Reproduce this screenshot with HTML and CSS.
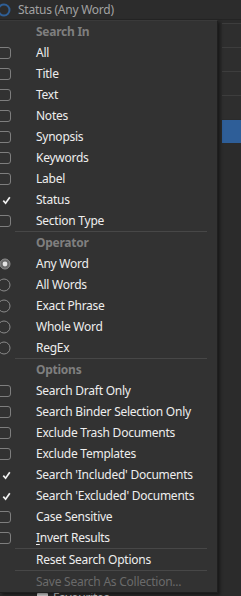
FILE: index.html
```html
<!DOCTYPE html>
<html>
<head>
<meta charset="utf-8">
<link rel="stylesheet" href="styles.css">
</head>
<body>
<div class="app">
  <div class="topbar">
    <svg class="topicon" width="14" height="20" viewBox="0 0 14 20"><circle cx="2" cy="10" r="5.5" fill="none" stroke="#2f5f96" stroke-width="2"/></svg>
    <span class="toptext">Status (Any Word)</span>
  </div>
  <div class="pane">
    <div class="list">
      <div class="lrow"></div>
      <div class="lrow"></div>
      <div class="lrow"></div>
      <div class="lrow"></div>
      <div class="lrow sel"></div>
    </div>
  </div>
  <div class="footer"><span class="fbox"></span><span class="ftext">Favourites</span></div>

  <div class="menu">
    <div class="row head"><span class="ind"></span><span class="lbl">Search In</span></div>
    <div class="row"><span class="ind"><svg width="16" height="14" viewBox="0 0 16 14"><rect x="-3" y="1.5" width="13.5" height="11" rx="2.5" fill="none" stroke="#7e7e7e"/></svg></span><span class="lbl">All</span></div>
    <div class="row"><span class="ind"><svg width="16" height="14" viewBox="0 0 16 14"><rect x="-3" y="1.5" width="13.5" height="11" rx="2.5" fill="none" stroke="#7e7e7e"/></svg></span><span class="lbl">Title</span></div>
    <div class="row"><span class="ind"><svg width="16" height="14" viewBox="0 0 16 14"><rect x="-3" y="1.5" width="13.5" height="11" rx="2.5" fill="none" stroke="#7e7e7e"/></svg></span><span class="lbl">Text</span></div>
    <div class="row"><span class="ind"><svg width="16" height="14" viewBox="0 0 16 14"><rect x="-3" y="1.5" width="13.5" height="11" rx="2.5" fill="none" stroke="#7e7e7e"/></svg></span><span class="lbl">Notes</span></div>
    <div class="row"><span class="ind"><svg width="16" height="14" viewBox="0 0 16 14"><rect x="-3" y="1.5" width="13.5" height="11" rx="2.5" fill="none" stroke="#7e7e7e"/></svg></span><span class="lbl">Synopsis</span></div>
    <div class="row"><span class="ind"><svg width="16" height="14" viewBox="0 0 16 14"><rect x="-3" y="1.5" width="13.5" height="11" rx="2.5" fill="none" stroke="#7e7e7e"/></svg></span><span class="lbl">Keywords</span></div>
    <div class="row"><span class="ind"><svg width="16" height="14" viewBox="0 0 16 14"><rect x="-3" y="1.5" width="13.5" height="11" rx="2.5" fill="none" stroke="#7e7e7e"/></svg></span><span class="lbl">Label</span></div>
    <div class="row"><span class="ind"><svg width="16" height="14" viewBox="0 0 16 14"><path d="M3.3 7.6 L5.6 10.2 L9.8 4.2" fill="none" stroke="#f2f2f2" stroke-width="1.7"/></svg></span><span class="lbl">Status</span></div>
    <div class="row"><span class="ind"><svg width="16" height="14" viewBox="0 0 16 14"><rect x="-3" y="1.5" width="13.5" height="11" rx="2.5" fill="none" stroke="#7e7e7e"/></svg></span><span class="lbl">Section Type</span></div>
    <div class="sep"></div>
    <div class="row head"><span class="ind"></span><span class="lbl">Operator</span></div>
    <div class="row"><span class="ind"><svg width="16" height="14" viewBox="0 0 16 14"><circle cx="5" cy="7" r="5" fill="#6a6a6a" stroke="#8e8e8e"/><circle cx="5" cy="7" r="2.4" fill="#e4e4e4"/></svg></span><span class="lbl">Any Word</span></div>
    <div class="row"><span class="ind"><svg width="16" height="14" viewBox="0 0 16 14"><circle cx="4" cy="7" r="6" fill="none" stroke="#8a8a8a"/></svg></span><span class="lbl">All Words</span></div>
    <div class="row"><span class="ind"><svg width="16" height="14" viewBox="0 0 16 14"><circle cx="4" cy="7" r="6" fill="none" stroke="#8a8a8a"/></svg></span><span class="lbl">Exact Phrase</span></div>
    <div class="row"><span class="ind"><svg width="16" height="14" viewBox="0 0 16 14"><circle cx="4" cy="7" r="6" fill="none" stroke="#8a8a8a"/></svg></span><span class="lbl">Whole Word</span></div>
    <div class="row"><span class="ind"><svg width="16" height="14" viewBox="0 0 16 14"><circle cx="4" cy="7" r="6" fill="none" stroke="#8a8a8a"/></svg></span><span class="lbl">RegEx</span></div>
    <div class="sep"></div>
    <div class="row head"><span class="ind"></span><span class="lbl">Options</span></div>
    <div class="row"><span class="ind"><svg width="16" height="14" viewBox="0 0 16 14"><rect x="-3" y="1.5" width="13.5" height="11" rx="2.5" fill="none" stroke="#7e7e7e"/></svg></span><span class="lbl">Search Draft Only</span></div>
    <div class="row"><span class="ind"><svg width="16" height="14" viewBox="0 0 16 14"><rect x="-3" y="1.5" width="13.5" height="11" rx="2.5" fill="none" stroke="#7e7e7e"/></svg></span><span class="lbl">Search Binder Selection Only</span></div>
    <div class="row"><span class="ind"><svg width="16" height="14" viewBox="0 0 16 14"><rect x="-3" y="1.5" width="13.5" height="11" rx="2.5" fill="none" stroke="#7e7e7e"/></svg></span><span class="lbl">Exclude Trash Documents</span></div>
    <div class="row"><span class="ind"><svg width="16" height="14" viewBox="0 0 16 14"><rect x="-3" y="1.5" width="13.5" height="11" rx="2.5" fill="none" stroke="#7e7e7e"/></svg></span><span class="lbl">Exclude Templates</span></div>
    <div class="row"><span class="ind"><svg width="16" height="14" viewBox="0 0 16 14"><path d="M3.3 7.6 L5.6 10.2 L9.8 4.2" fill="none" stroke="#f2f2f2" stroke-width="1.7"/></svg></span><span class="lbl">Search 'Included' Documents</span></div>
    <div class="row"><span class="ind"><svg width="16" height="14" viewBox="0 0 16 14"><path d="M3.3 7.6 L5.6 10.2 L9.8 4.2" fill="none" stroke="#f2f2f2" stroke-width="1.7"/></svg></span><span class="lbl">Search 'Excluded' Documents</span></div>
    <div class="row"><span class="ind"><svg width="16" height="14" viewBox="0 0 16 14"><rect x="-3" y="1.5" width="13.5" height="11" rx="2.5" fill="none" stroke="#7e7e7e"/></svg></span><span class="lbl">Case Sensitive</span></div>
    <div class="row"><span class="ind"><svg width="16" height="14" viewBox="0 0 16 14"><rect x="-3" y="1.5" width="13.5" height="11" rx="2.5" fill="none" stroke="#7e7e7e"/></svg></span><span class="lbl"><u>I</u>nvert Results</span></div>
    <div class="sep"></div>
    <div class="row"><span class="ind"></span><span class="lbl">Reset Search Options</span></div>
    <div class="sep"></div>
    <div class="row dis"><span class="ind"></span><span class="lbl">Save Search As Collection...</span></div>
  </div>
</div>
</body>
</html>
```

FILE: styles.css
```css
html, body {
  margin: 0;
  padding: 0;
  background: #2b2b2b;
  overflow: hidden;
}
.app {
  position: relative;
  width: 241px;
  height: 596px;
  display: flex;
  flex-direction: column;
  font-family: "Noto Sans", "Open Sans", sans-serif;
  font-size: 12px;
  letter-spacing: -0.25px;
}
.topbar {
  height: 20px;
  display: flex;
  align-items: center;
  background: #2c2c2c;
  border-bottom: 1px solid #242424;
  box-sizing: border-box;
}
.topicon {
  display: block;
  width: 18px;
  flex: none;
}
.toptext {
  color: #a2a2a2;
  white-space: nowrap;
}
.pane {
  flex: 1;
  display: flex;
  justify-content: flex-end;
}
.list {
  width: 19px;
  padding-top: 3px;
  display: flex;
  flex-direction: column;
}
.lrow {
  height: 24px;
  border-top: 1px solid #3d3d3d;
  box-sizing: border-box;
  background: #2e2e2e;
}
.lrow.sel {
  background: #2e5e98;
  border-top: none;
  height: 23px;
  margin-top: 1px;
}
.footer {
  height: 4px;
  display: flex;
  align-items: flex-start;
  gap: 5px;
  padding-left: 37px;
  overflow: hidden;
}
.fbox {
  width: 11px;
  height: 10px;
  margin-top: 1px;
  background: #d8d8d8;
  border-radius: 1px;
}
.ftext {
  color: #cfcfcf;
  line-height: 14px;
  margin-top: -1px;
}
.menu {
  position: absolute;
  left: 0;
  top: 20px;
  width: 218px;
  box-sizing: border-box;
  background: #323232;
  border-top: 1px solid #3a3a3a;
  border-right: 1px solid #1f1f1f;
  border-bottom: 1px solid #1f1f1f;
  box-shadow: 2px 2px 3px rgba(0,0,0,0.45);
  display: flex;
  flex-direction: column;
}
.row {
  height: 21px;
  display: flex;
  align-items: center;
  color: #eeeeee;
  white-space: nowrap;
}
.ind {
  width: 36px;
  flex: none;
  display: flex;
  align-items: center;
}
.ind svg {
  display: block;
}
.row.head {
  color: #7f7f7f;
  font-weight: bold;
}
.row.dis {
  color: #6a6a6a;
}
.lbl u {
  text-decoration-thickness: 1px;
  text-underline-offset: 2px;
}
.sep {
  height: 1px;
  margin: 0 10px 0 15px;
  background: #474747;
}
```
